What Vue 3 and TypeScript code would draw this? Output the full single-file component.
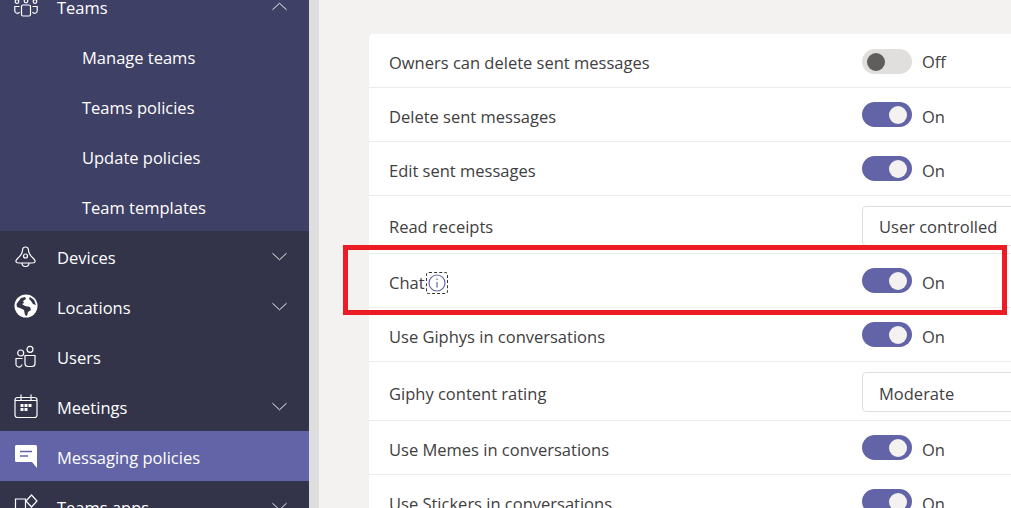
<script setup lang="ts">
interface NavItem { label: string; icon: string; chevron?: 'up' | 'down'; active?: boolean; children?: string[] }
const nav: NavItem[] = [
  { label: 'Teams', icon: 'teams', chevron: 'up', children: ['Manage teams', 'Teams policies', 'Update policies', 'Team templates'] },
  { label: 'Devices', icon: 'devices', chevron: 'down' },
  { label: 'Locations', icon: 'globe', chevron: 'down' },
  { label: 'Users', icon: 'users' },
  { label: 'Meetings', icon: 'calendar', chevron: 'down' },
  { label: 'Messaging policies', icon: 'message', active: true },
  { label: 'Teams apps', icon: 'apps', chevron: 'down' },
]
interface Row { label: string; kind: 'switch' | 'dropdown'; on?: boolean; value?: string; info?: boolean }
const rows: Row[] = [
  { label: 'Owners can delete sent messages', kind: 'switch', on: false },
  { label: 'Delete sent messages', kind: 'switch', on: true },
  { label: 'Edit sent messages', kind: 'switch', on: true },
  { label: 'Read receipts', kind: 'dropdown', value: 'User controlled' },
  { label: 'Chat', kind: 'switch', on: true, info: true },
  { label: 'Use Giphys in conversations', kind: 'switch', on: true },
  { label: 'Giphy content rating', kind: 'dropdown', value: 'Moderate' },
  { label: 'Use Memes in conversations', kind: 'switch', on: true },
  { label: 'Use Stickers in conversations', kind: 'switch', on: true },
]
</script>

<template>
  <div class="page">
    <aside class="sidebar">
      <template v-for="item in nav" :key="item.label">
        <div class="nav-row" :class="{ active: item.active, open: item.children }">
          <svg class="icon" viewBox="0 0 24 24" fill="none" stroke="currentColor" stroke-width="1.2">
            <template v-if="item.icon === 'teams'">
              <circle cx="3" cy="7.500" r="1.800" /><circle cx="12" cy="7" r="1.800" /><circle cx="21" cy="7.500" r="1.800" />
              <rect x="7.500" y="11" width="9" height="11" rx="1.500" />
              <path d="M5.500 12.500H.8v4.500a2.500 2.500 0 0 0 4.700 1M18.500 12.500h4.700v4.500a2.500 2.500 0 0 1-4.700 1" />
            </template>
            <template v-else-if="item.icon === 'devices'">
              <g transform="translate(-.5 1.500)">
                <circle cx="12" cy="10.500" r="2" />
                <path d="M12 1.500c-2 0-3 1.500-3 3.500 0 3-1.500 5-5 8-2.500 2.500-2 4.500 1 4.500h14c3 0 3.500-2 1-4.500-3.500-3-5-5-5-8 0-2-1-3.500-3-3.500z" />
                <path d="M8.500 17.500c0 2 1.500 3.500 3.500 3.500s3.500-1.500 3.500-3.500" />
              </g>
            </template>
            <template v-else-if="item.icon === 'globe'">
              <circle cx="12" cy="12" r="11.500" fill="#fff" stroke="none" />
              <path fill="#33344a" stroke="none" d="M2.500 10 7 4l4-1 1 2-3 2 1 2-2 1 3 2 5 1 1 3-3 2-1 4-2-1-1-5-4-2-3-1zM16 3l4 3 2 5-3-1-2-3-2-2z" />
            </template>
            <template v-else-if="item.icon === 'users'">
              <circle cx="6.700" cy="9" r="3" /><circle cx="16" cy="5.300" r="3" />
              <path d="M8.500 14.500H2v5a3 3 0 0 0 6 1" />
              <path d="M11 11.500h10v8a3 3 0 0 1-3 3h-4a3 3 0 0 1-3-3z" />
            </template>
            <template v-else-if="item.icon === 'calendar'">
              <rect x="1" y="3.500" width="22" height="20" rx="2.500" />
              <path d="M7 .5V6M17 .5V6M1 6.500h22" />
              <path fill="currentColor" stroke="none" d="M6.500 10h3v3h-3zM10.500 10h3v3h-3zM14.500 10h3v3h-3zM6.500 14h3v3h-3zM10.500 14h3v3h-3z" />
            </template>
            <template v-else-if="item.icon === 'message'">
              <path fill="#fff" stroke="none" d="M2.500 1h19A1.500 1.500 0 0 1 23 2.500V24l-5-6H2.500A1.500 1.500 0 0 1 1 16.500v-14A1.500 1.500 0 0 1 2.500 1z" />
              <path stroke="#6264a7" stroke-width="1.500" d="M6 7.500h12M6 12h8" />
            </template>
            <template v-else>
              <path d="M1.500 5h10v10h-10zM11.500 15h10v7h-10zM1.500 15h10v7h-10z" />
              <path d="M17.500 1 23 7l-5.500 6L12 7z" />
            </template>
          </svg>
          <span class="nav-label">{{ item.label }}</span>
          <svg v-if="item.chevron" class="chev" viewBox="0 0 16 9" fill="none" stroke="currentColor" stroke-width="1">
            <path :d="item.chevron === 'up' ? 'M.5 8 8 1l7.500 7' : 'M.5 1 8 8l7.500-7'" />
          </svg>
        </div>
        <div v-for="c in item.children" :key="c" class="sub-row">{{ c }}</div>
      </template>
    </aside>
    <div class="gutter"></div>
    <main class="main">
      <section class="card">
        <div v-for="r in rows" :key="r.label" class="row" :class="r.kind">
          <div class="row-label">
            <span>{{ r.label }}</span>
            <span v-if="r.info" class="info-focus">
              <svg viewBox="0 0 18 18" fill="none" stroke="#6264a7" stroke-width="1.200">
                <circle cx="9" cy="9" r="8" />
                <path d="M9 8v5.500" />
                <circle cx="9" cy="5.300" r=".8" fill="#6264a7" stroke="none" />
              </svg>
            </span>
          </div>
          <div class="row-control">
            <template v-if="r.kind === 'switch'">
              <span class="toggle" :class="{ on: r.on }"><i></i></span>
              <span class="state">{{ r.on ? 'On' : 'Off' }}</span>
            </template>
            <div v-else class="select">{{ r.value }}</div>
          </div>
        </div>
      </section>
      <div class="highlight"></div>
    </main>
  </div>
</template>

<style>
html, body { margin: 0; overflow: hidden; background: #f3f2f1; }
</style>

<style scoped>
.page {
  display: flex;
  height: 508px;
  width: 1011px;
  overflow: hidden;
  font-family: "Open Sans", "Noto Sans", sans-serif;
  font-size: 16.5px;
}
.sidebar {
  width: 309px;
  flex: none;
  margin-top: -19px;
  height: 527px;
  background: #33344a;
  color: #fff;
}
.nav-row {
  display: flex;
  align-items: center;
  height: 50px;
  padding: 0 22px 0 14px;
  box-sizing: border-box;
}
.nav-row.active { background: #6264a7; }
.nav-row.open { background: #3f4066; }
.icon { width: 24px; height: 24px; flex: none; overflow: visible; }
.nav-label { margin-left: 19px; flex: 1; padding-top: 3px; }
.chev { width: 15px; height: 9px; flex: none; }
.sub-row {
  height: 50px;
  line-height: 54px;
  padding-left: 82px;
  background: #3f4066;
}
.gutter { width: 10px; flex: none; background: #dedede; }
.main {
  flex: 1;
  min-width: 0;
  padding: 34px 0 0 50px;
  position: relative;
}
.card {
  background: #fff;
  border-radius: 4px 0 0 4px;
  height: 520px;
}
.row {
  display: flex;
  align-items: center;
  height: 54px;
  padding-left: 20px;
  border-bottom: 1px solid #edebe9;
  box-sizing: border-box;
  color: #414040;
}
.row:first-child { padding-top: 2px; }
.row.dropdown { height: auto; padding-top: 10px; padding-bottom: 7px; }
.row.dropdown:nth-child(7) { padding-bottom: 8px; }
.row-label {
  flex: 1;
  display: flex;
  align-items: center;
  white-space: nowrap;
  padding-top: 4px;
}
.row.dropdown .row-label { padding-top: 2px; }
.row.dropdown:nth-child(4) .row-label { padding-top: 0; }
.row:first-child .row-label { padding-top: 2px; }
.row-control { width: 149px; flex: none; display: flex; align-items: center; }
.info-focus {
  display: inline-flex;
  width: 22px;
  height: 22px;
  margin-left: 1px;
  align-items: center;
  justify-content: center;
  border: 1px dashed #333;
  border-radius: 3px;
  box-sizing: border-box;
}
.info-focus svg { width: 18px; height: 18px; }
.toggle {
  width: 50px;
  height: 25px;
  border-radius: 13px;
  background: #e1dfdd;
  display: flex;
  align-items: center;
  padding: 0 5px;
  box-sizing: border-box;
  flex: none;
}
.toggle i { width: 18px; height: 18px; border-radius: 50%; background: #605e5c; }
.toggle.on { background: #6264a7; justify-content: flex-end; }
.toggle.on i { background: #f3f2f1; }
.state { margin-left: 10px; padding-top: 3px; }
.row:first-child .state { padding-top: 0; }
.select {
  width: 170px;
  height: 40px;
  display: flex;
  align-items: center;
  padding: 2px 0 0 16px;
  border: 1px solid #e1dfdd;
  border-radius: 4px;
  box-sizing: border-box;
  flex: none;
  white-space: nowrap;
}
.row.dropdown:nth-child(4) .select { padding-top: 0; }
.highlight {
  position: absolute;
  left: 24px;
  top: 245px;
  width: 664px;
  height: 70px;
  border: 5px solid #ed1c24;
  box-sizing: border-box;
  pointer-events: none;
}
</style>
